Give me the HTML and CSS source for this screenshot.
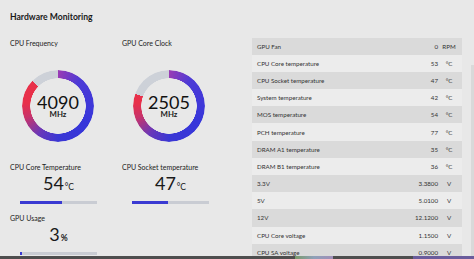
FILE: index.html
```html
<!DOCTYPE html>
<html lang="en">
<head>
  <meta charset="UTF-8">
  <title>Hardware Monitoring</title>
  <link rel="stylesheet" href="styles.css">
</head>
<body>

  <div class="app">
    <h1>Hardware Monitoring</h1>

    <div class="main">
      <div class="left">
        <div class="gauges">
          <div class="gauge-card">
            <div class="label">CPU Frequency</div>
            <div class="ring-wrap">
              <div class="ring cpu"></div>
              <div class="ring-text">
                <div class="big">4090</div>
                <div class="unit">MHz</div>
              </div>
            </div>
          </div>
          <div class="gauge-card">
            <div class="label">GPU Core Clock</div>
            <div class="ring-wrap">
              <div class="ring gpu"></div>
              <div class="ring-text">
                <div class="big">2505</div>
                <div class="unit">MHz</div>
              </div>
            </div>
          </div>
        </div>

        <div class="meters">
          <div class="meter">
            <div class="label">CPU Core Temperature</div>
            <div class="value">54<span class="small">°C</span></div>
            <div class="bar"><div class="fill" style="width: 54%"></div></div>
          </div>
          <div class="meter">
            <div class="label">CPU Socket temperature</div>
            <div class="value">47<span class="small">°C</span></div>
            <div class="bar"><div class="fill" style="width: 47%"></div></div>
          </div>
          <div class="meter">
            <div class="label">GPU Usage</div>
            <div class="value">3<span class="small pct">%</span></div>
            <div class="bar"><div class="fill" style="width: 3%"></div></div>
          </div>
        </div>
      </div>

      <div class="sensors">
        <div class="row"><span class="name">GPU Fan</span><span class="val">0</span><span class="u">RPM</span></div>
        <div class="row"><span class="name">CPU Core temperature</span><span class="val">53</span><span class="u">°C</span></div>
        <div class="row"><span class="name">CPU Socket temperature</span><span class="val">47</span><span class="u">°C</span></div>
        <div class="row"><span class="name">System temperature</span><span class="val">42</span><span class="u">°C</span></div>
        <div class="row"><span class="name">MOS temperature</span><span class="val">54</span><span class="u">°C</span></div>
        <div class="row"><span class="name">PCH temperature</span><span class="val">77</span><span class="u">°C</span></div>
        <div class="row"><span class="name">DRAM A1 temperature</span><span class="val">35</span><span class="u">°C</span></div>
        <div class="row"><span class="name">DRAM B1 temperature</span><span class="val">36</span><span class="u">°C</span></div>
        <div class="row"><span class="name">3.3V</span><span class="val">3.3800</span><span class="u">V</span></div>
        <div class="row"><span class="name">5V</span><span class="val">5.0100</span><span class="u">V</span></div>
        <div class="row"><span class="name">12V</span><span class="val">12.1200</span><span class="u">V</span></div>
        <div class="row"><span class="name">CPU Core voltage</span><span class="val">1.1500</span><span class="u">V</span></div>
        <div class="row"><span class="name">CPU SA voltage</span><span class="val">0.9000</span><span class="u">V</span></div>
      </div>

      <div class="scroll"><div class="thumb"></div></div>
    </div>
  </div>

  <div class="taskbar">
    <div class="tb-icons"></div>
    <div class="tb-tray"></div>
  </div>

</body>
</html>
```

FILE: styles.css
```css
html, body {
  margin: 0;
  padding: 0;
  height: 259px;
  overflow: hidden;
}
body {
  background-color: #e8e8e8;
  color: #1a1a1a;
  font-family: Lato, "Open Sans", sans-serif;
}
.app {
  height: 256px;
  overflow: hidden;
}
h1 {
  margin: 0;
  padding: 11px 0 0 10px;
  font-size: 8.6px;
  line-height: 12px;
  font-weight: bold;
  height: 26px;
  box-sizing: border-box;
}
.main {
  display: flex;
  margin-top: 11px;
}
.left {
  width: 252px;
  padding-left: 10px;
  box-sizing: border-box;
}
.label {
  font-size: 7px;
  line-height: 10px;
  color: #222;
  white-space: nowrap;
}
.gauges {
  display: flex;
}
.gauge-card {
  width: 112px;
}
.gauge-card .label {
  margin-top: 1px;
}
.ring-wrap {
  position: relative;
  width: 72px;
  height: 72px;
  margin: 22px 0 0 12px;
}
.gauge-card + .gauge-card .ring-wrap {
  margin-left: 11px;
}
.ring {
  width: 72px;
  height: 72px;
  border-radius: 50%;
  -webkit-mask: radial-gradient(farthest-side, transparent calc(100% - 8.5px), #000 calc(100% - 8px));
  mask: radial-gradient(farthest-side, transparent calc(100% - 8.5px), #000 calc(100% - 8px));
}
.ring.cpu {
  background: conic-gradient(#9a3bb4 0deg, #4c3ad6 40deg, #3636da 120deg, #3a37d4 180deg, #6a38b8 215deg, #c8336a 250deg, #e8304a 275deg, #e8304a 315deg, #cdd1d8 315deg);
}
.ring.gpu {
  background: conic-gradient(#9a3bb4 0deg, #4c3ad6 40deg, #3636da 120deg, #3a37d4 180deg, #6a38b8 215deg, #c8336a 250deg, #e8304a 275deg, #e8304a 290deg, #cdd1d8 290deg);
}
.ring-text {
  position: absolute;
  inset: 0;
  display: flex;
  flex-direction: column;
  align-items: center;
  justify-content: center;
}
.big {
  font-size: 18px;
  line-height: 16px;
  color: #111;
}
.unit {
  font-size: 7.8px;
  line-height: 8px;
  font-weight: bold;
}
.meters {
  display: grid;
  grid-template-columns: 112px 112px;
  margin-top: 20px;
  row-gap: 9px;
}
.value {
  font-size: 18px;
  line-height: 20px;
  margin: 1px 0 0 0;
  width: 97px;
  text-align: center;
}
.small {
  font-size: 8.5px;
  margin-left: 1px;
}
.small.pct {
  font-weight: bold;
}
.bar {
  width: 77px;
  height: 3px;
  margin: 4px 0 0 10px;
  background: #c9ccd3;
}
.fill {
  height: 100%;
  background: #3a3ad2;
}
.sensors {
  width: 210px;
  margin-top: 0.5px;
}
.row {
  display: flex;
  align-items: center;
  height: 17.2px;
  padding-left: 5px;
  font-size: 6.2px;
  color: #333;
  background: #ececec;
}
.row:nth-child(odd) {
  background: #dadada;
}
.name {
  flex: 1;
}
.val {
  text-align: right;
}
.u {
  width: 22px;
  text-align: center;
  margin-right: 2px;
}
.scroll {
  width: 3px;
  margin-left: 9px;
  padding-top: 28px;
}
.thumb {
  height: 200px;
  background: #d9d9d9;
}
.taskbar {
  height: 3px;
  background: #4e4e4e;
  display: flex;
}
.tb-icons {
  width: 38px;
  margin-left: 295px;
  background: linear-gradient(90deg, #7a9a6a, #8fa0b8, #a08fb8);
}
.tb-tray {
  flex: 1;
  margin-left: 80px;
  background: #6a5c9c;
}
```
